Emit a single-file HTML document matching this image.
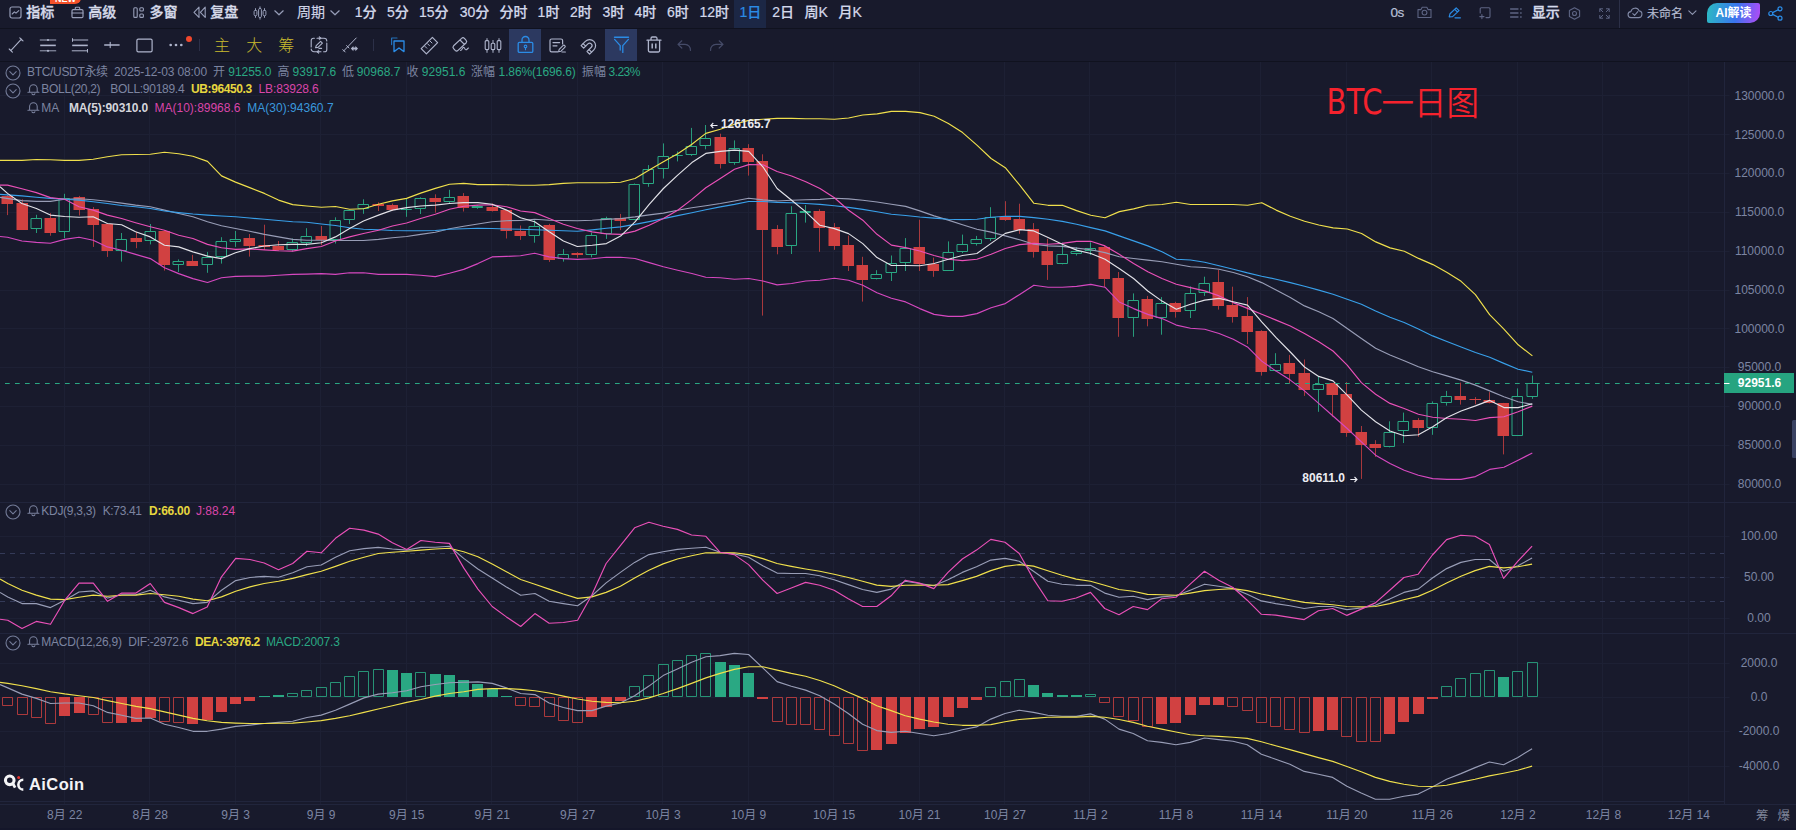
<!DOCTYPE html>
<html lang="zh-CN">
<head>
<meta charset="utf-8">
<title>BTC/USDT永续 - AiCoin</title>
<style>
html,body{margin:0;padding:0;background:#181a2c;}
body{width:1796px;height:830px;position:relative;overflow:hidden;font-family:"Liberation Sans","Noto Sans CJK SC",sans-serif;color:#d3d8ea;}
.abs{position:absolute;white-space:nowrap;}
#tb1{position:absolute;left:0;top:0;width:1796px;height:28px;border-bottom:1px solid #10121f;box-sizing:content-box;}
#tb2{position:absolute;left:0;top:29px;width:1796px;height:32px;border-bottom:1px solid #10121f;}
.t1{position:absolute;top:0;height:27px;line-height:25px;font-size:14px;color:#d3d8ea;white-space:nowrap;font-weight:500;}
.t1{-webkit-text-stroke:0.2px currentColor}
.ic{position:absolute;overflow:visible}
.hl{position:absolute;background:#1f2a4a;}
.lg{position:absolute;font-size:12px;line-height:14px;white-space:nowrap;color:#7c84a0;}
.lg span{position:absolute;top:0}
.g{color:#2aa883}.y{color:#e6d63f;font-weight:bold}.p{color:#d845a9}.b{color:#3a98dc}.w{color:#d4d5dc;font-weight:bold}
</style>
</head>
<body>
<div id="tb1"></div><div id="tb2"></div>
<div class="hl" style="left:734px;top:0;width:32px;height:28px;background:#1c2745"></div>
<div class="hl" style="left:509px;top:29px;width:32px;height:32px;background:#2c3960"></div>
<div class="hl" style="left:605px;top:29px;width:32px;height:32px;background:#2c3960"></div>
<div class="abs" style="left:50px;top:-9px;width:31px;height:13px;background:#f5522a;border-radius:0 0 6px 0;font-size:9px;line-height:9px;padding-top:3.800px;box-sizing:border-box;color:#fff;font-weight:bold;text-align:center;overflow:hidden">NEW</div>
<div class="t1" style="left:26.3px;font-weight:500;-webkit-text-stroke:0.35px currentColor;color:#d6daea">指标</div>
<div class="t1" style="left:88.3px;font-weight:500;-webkit-text-stroke:0.35px currentColor;color:#d6daea">高级</div>
<div class="t1" style="left:149.5px;font-weight:500;-webkit-text-stroke:0.35px currentColor;color:#d6daea">多窗</div>
<div class="t1" style="left:210.3px;font-weight:500;-webkit-text-stroke:0.35px currentColor;color:#d6daea">复盘</div>
<div class="t1" style="left:297px;color:#cfd4e6;font-weight:400">周期</div>
<div class="t1" style="left:354.8px">1分</div>
<div class="t1" style="left:387px">5分</div>
<div class="t1" style="left:419px">15分</div>
<div class="t1" style="left:459.8px">30分</div>
<div class="t1" style="left:499.5px">分时</div>
<div class="t1" style="left:537.6px">1时</div>
<div class="t1" style="left:570px">2时</div>
<div class="t1" style="left:602.5px">3时</div>
<div class="t1" style="left:634.5px">4时</div>
<div class="t1" style="left:667px">6时</div>
<div class="t1" style="left:699.5px">12时</div>
<div class="t1" style="left:772.2px">2日</div>
<div class="t1" style="left:804.5px">周K</div>
<div class="t1" style="left:838.6px">月K</div>
<div class="t1" style="left:739.4px;color:#2b8ce6">1日</div>
<svg class="ic" style="left:8.5px;top:5.5px" width="13" height="13" viewBox="0 0 13 13" fill="none" stroke-linecap="round" stroke-linejoin="round" ><rect x="1" y="1" width="11" height="11" rx="2" stroke="#979eb8" stroke-width="1.2"/><path d="M3.2 8 L5.4 5.8 L7 7.2 L9.8 4.6" stroke="#979eb8" stroke-width="1.1"/></svg>
<svg class="ic" style="left:70.5px;top:5.5px" width="13" height="13" viewBox="0 0 13 13" fill="none" stroke-linecap="round" stroke-linejoin="round" ><rect x="1" y="3.6" width="11" height="8" rx="1.2" stroke="#979eb8" stroke-width="1.2"/><path d="M4.3 3.4 V2 a0.8 0.8 0 0 1 .8-.8 h2.8 a0.8 0.8 0 0 1 .8.8 V3.4 M1 7 H12" stroke="#979eb8" stroke-width="1.1"/></svg>
<svg class="ic" style="left:132.5px;top:7px" width="12" height="12" viewBox="0 0 12 12" fill="none" stroke-linecap="round" stroke-linejoin="round" ><rect x="0.8" y="0.8" width="3.4" height="9.6" rx="1" stroke="#979eb8" stroke-width="1.1"/><rect x="6.8" y="0.8" width="3.6" height="3.2" rx="1" stroke="#979eb8" stroke-width="1.1"/><rect x="6.8" y="7" width="3.6" height="3.4" rx="1" stroke="#979eb8" stroke-width="1.1"/></svg>
<svg class="ic" style="left:192.5px;top:6px" width="14" height="13" viewBox="0 0 14 13" fill="none" stroke-linecap="round" stroke-linejoin="round" ><path d="M6 1.2 V11.4 L1 6.3z M12.2 1.2 V11.4 L7.4 6.3z" stroke="#979eb8" stroke-width="1.1"/></svg>
<svg class="ic" style="left:252.5px;top:6px" width="15" height="14" viewBox="0 0 15 14" fill="none" stroke-linecap="round" stroke-linejoin="round" ><g stroke="#979eb8" stroke-width="1"><path d="M2.500 2.600 V11.400 M7 0.800 V13.200 M11.500 2.600 V11.400"/><rect x="1.100" y="4.200" width="2.800" height="5.600" rx="1.300" fill="#181a2c"/><rect x="5.600" y="2.400" width="2.800" height="9.200" rx="1.300" fill="#181a2c"/><rect x="10.100" y="4.200" width="2.800" height="5.600" rx="1.300" fill="#181a2c"/></g></svg>
<svg class="ic" style="left:273.5px;top:10px" width="10" height="6" viewBox="0 0 10 6" fill="none" stroke-linecap="round" stroke-linejoin="round" ><path d="M0.8 0.8 L5 4.8 L9.2 0.8" stroke="#979eb8" stroke-width="1.2"/></svg>
<svg class="ic" style="left:330px;top:10px" width="10" height="6" viewBox="0 0 10 6" fill="none" stroke-linecap="round" stroke-linejoin="round" ><path d="M0.8 0.8 L5 4.8 L9.2 0.8" stroke="#979eb8" stroke-width="1.2"/></svg>
<div class="t1" style="left:1390.5px;font-size:13.5px;color:#b9c0d8;letter-spacing:-0.4px">0s</div>
<svg class="ic" style="left:1417px;top:6px" width="15" height="13" viewBox="0 0 15 13" fill="none" stroke-linecap="round" stroke-linejoin="round" ><path d="M1 3.6 h3 l1.2-2.4 h4.6 l1.2 2.4 h3 v7.9 h-13z" stroke="#5d6483" stroke-width="1.1"/><circle cx="7.5" cy="6.6" r="2.4" stroke="#5d6483" stroke-width="1.1"/></svg>
<svg class="ic" style="left:1448px;top:7px" width="14" height="12" viewBox="0 0 14 12" fill="none" stroke-linecap="round" stroke-linejoin="round" ><path d="M1.2 9.8 L2 6.8 L8.2 0.9 L11 3.6 L4.6 9.6z M6.8 2.4 L9.4 5" stroke="#2b8ce6" stroke-width="1.2"/><path d="M7 10.8 H12.4" stroke="#2b8ce6" stroke-width="1.2"/></svg>
<svg class="ic" style="left:1478.5px;top:6.5px" width="13" height="12" viewBox="0 0 13 12" fill="none" stroke-linecap="round" stroke-linejoin="round" ><path d="M1.2 6 V1.8 a1 1 0 0 1 1-1 H10 a1 1 0 0 1 1 1 V9.6 a1 1 0 0 1-1 1 H7" stroke="#5d6483" stroke-width="1.1"/><path d="M0.8 9.6 H5 M2.9 7.6 V11.6" stroke="#5d6483" stroke-width="1.1"/></svg>
<svg class="ic" style="left:1509.5px;top:7.5px" width="12" height="10" viewBox="0 0 12 10" fill="none" stroke-linecap="round" stroke-linejoin="round" ><path d="M0.6 1 H8 M0.6 5 H8 M0.6 9 H8" stroke="#5d6483" stroke-width="1.3"/><path d="M10.6 1 h.6 M10.6 5 h.6 M10.6 9 h.6" stroke="#5d6483" stroke-width="1.3"/></svg>
<div class="t1" style="left:1531.8px;font-weight:500;-webkit-text-stroke:0.35px currentColor;color:#d6daea">显示</div>
<svg class="ic" style="left:1567.5px;top:6.5px" width="13" height="13" viewBox="0 0 13 13" fill="none" stroke-linecap="round" stroke-linejoin="round" ><path d="M6.5 0.8 L11.6 3.6 V9.4 L6.5 12.2 L1.4 9.4 V3.6z" stroke="#5d6483" stroke-width="1.1"/><circle cx="6.5" cy="6.5" r="2" stroke="#5d6483" stroke-width="1.1"/></svg>
<svg class="ic" style="left:1598.5px;top:7.5px" width="11" height="11" viewBox="0 0 11 11" fill="none" stroke-linecap="round" stroke-linejoin="round" ><path d="M0.8 3.6 V0.8 H3.6 M7.4 0.8 H10.2 V3.6 M10.2 7.4 V10.2 H7.4 M3.6 10.2 H0.8 V7.4 M1 1 L3.8 3.8 M10 1 L7.2 3.8 M10 10 L7.2 7.2 M1 10 L3.8 7.2" stroke="#5d6483" stroke-width="1"/></svg>
<div class="abs" style="left:1619px;top:0;width:1px;height:28px;background:#2c3048"></div>
<svg class="ic" style="left:1627px;top:7px" width="16" height="12" viewBox="0 0 16 12" fill="none" stroke-linecap="round" stroke-linejoin="round" ><path d="M4.2 10.6 H11.6 a3.4 3.4 0 0 0 .5-6.75 A4.3 4.3 0 0 0 3.9 4.6 A3 3 0 0 0 4.2 10.6z" stroke="#8189a6" stroke-width="1.1"/><path d="M5.8 6.6 L7.6 8.3 L10.8 4.6" stroke="#8189a6" stroke-width="1.1"/></svg>
<div class="t1" style="left:1647px;top:1.500px;font-size:12px;color:#b4bad0;font-weight:400">未命名</div>
<svg class="ic" style="left:1687.5px;top:10px" width="9" height="6" viewBox="0 0 9 6" fill="none" stroke-linecap="round" stroke-linejoin="round" ><path d="M0.8 0.8 L4.4 4.4 L8 0.8" stroke="#8f96b0" stroke-width="1.1"/></svg>
<div class="abs" style="left:1707px;top:2.5px;width:53px;height:20.5px;border-radius:10px 2px 10px 2px;background:linear-gradient(100deg,#2bbcc2 0%,#3a74ee 55%,#b54af6 100%);color:#fff;font-size:12px;font-weight:bold;line-height:20px;text-align:center">AI解读</div>
<svg class="ic" style="left:1767.5px;top:5.5px" width="15" height="15" viewBox="0 0 15 15" fill="none" stroke-linecap="round" stroke-linejoin="round" ><circle cx="12" cy="2.8" r="2" stroke="#2b8ce6" stroke-width="1.2"/><circle cx="12" cy="12.2" r="2" stroke="#2b8ce6" stroke-width="1.2"/><circle cx="2.8" cy="7.5" r="2" stroke="#2b8ce6" stroke-width="1.2"/><path d="M4.6 6.6 L10.2 3.7 M4.6 8.4 L10.2 11.3" stroke="#2b8ce6" stroke-width="1.2"/></svg>
<svg class="ic" style="left:8px;top:37px" width="16" height="16" viewBox="0 0 16 16" fill="none" stroke-linecap="round" stroke-linejoin="round" ><path d="M2.8 13.6 L13.4 2.2 M1.2 12 L4.4 15.2 M11.8 0.8 L15 3.8" stroke="#aeb4cb" stroke-width="1.1"/></svg>
<svg class="ic" style="left:40px;top:37.5px" width="16" height="15" viewBox="0 0 16 15" fill="none" stroke-linecap="round" stroke-linejoin="round" ><path d="M0.2 2 H15.8 M0.2 12.8 H15.8" stroke="#aeb4cb" stroke-width="0.9"/><path d="M0.2 7.4 H15.8" stroke="#aeb4cb" stroke-width="1.6" stroke-linecap="butt"/><circle cx="8" cy="2" r="1.1" fill="#aeb4cb"/><circle cx="8" cy="12.8" r="1.1" fill="#aeb4cb"/></svg>
<svg class="ic" style="left:72px;top:37.5px" width="16" height="15" viewBox="0 0 16 15" fill="none" stroke-linecap="round" stroke-linejoin="round" ><path d="M0.4 2 H15.8 M0.2 12.8 H15.6 M0.5 0.6 V3.4 M15.5 11.4 V14.2" stroke="#aeb4cb" stroke-width="1"/><path d="M0.2 7.4 H15.8" stroke="#aeb4cb" stroke-width="1.6" stroke-linecap="butt"/></svg>
<svg class="ic" style="left:104px;top:41px" width="16" height="8" viewBox="0 0 16 8" fill="none" stroke-linecap="round" stroke-linejoin="round" ><path d="M0.2 4 H15.6" stroke="#aeb4cb" stroke-width="1.5" stroke-linecap="butt"/><path d="M6.2 1.4 V6.6" stroke="#aeb4cb" stroke-width="1.1"/></svg>
<svg class="ic" style="left:135.5px;top:37.5px" width="17" height="15" viewBox="0 0 17 15" fill="none" stroke-linecap="round" stroke-linejoin="round" ><rect x="0.9" y="1.2" width="15.2" height="12.6" rx="1.4" stroke="#aeb4cb" stroke-width="1.2"/></svg>
<svg class="ic" style="left:169px;top:43px" width="14" height="4" viewBox="0 0 14 4" fill="none" stroke-linecap="round" stroke-linejoin="round" ><circle cx="1.7" cy="2" r="1.35" fill="#aeb4cb"/><circle cx="7" cy="2" r="1.35" fill="#aeb4cb"/><circle cx="12.3" cy="2" r="1.35" fill="#aeb4cb"/></svg>
<div class="abs" style="left:186px;top:36px;width:6px;height:6px;border-radius:3px;background:#f0472c"></div>
<div class="abs" style="left:199px;top:39px;width:1px;height:12px;background:#2c3048"></div>
<div class="abs" style="left:214px;top:36.300px;font-size:16px;line-height:20px;color:#c9ba2e;font-weight:300">主</div>
<div class="abs" style="left:246.3px;top:36.300px;font-size:16px;line-height:20px;color:#c9ba2e;font-weight:300">大</div>
<div class="abs" style="left:278.2px;top:36.300px;font-size:16px;line-height:20px;color:#c9ba2e;font-weight:300">筹</div>
<svg class="ic" style="left:309.5px;top:36px" width="18" height="18" viewBox="0 0 18 18" fill="none" stroke-linecap="round" stroke-linejoin="round" ><path d="M4.4 2.2 H3.6 a2.4 2.4 0 0 0-2.4 2.4 V11 M13.6 15.8 h.8 a2.4 2.4 0 0 0 2.4-2.4 V7" stroke="#aeb4cb" stroke-width="1.1"/><path d="M7 2.2 H14 a2.8 2.8 0 0 1 2.8 2.8 M11 15.8 H4 a2.8 2.8 0 0 1-2.8-2.8" stroke="#aeb4cb" stroke-width="1.1"/><path d="M9.6 0.8 L11.2 2.2 L9.6 3.6z M8.4 14.4 L6.8 15.8 L8.4 17.2z" fill="#aeb4cb" stroke="#aeb4cb" stroke-width="0.8"/><path d="M5.6 11.8 L6.2 9.6 L10.6 5.4 L12.4 7.2 L8 11.4z M9 12.4 H11.6" stroke="#aeb4cb" stroke-width="1.1"/></svg>
<svg class="ic" style="left:342px;top:37px" width="17" height="16" viewBox="0 0 17 16" fill="none" stroke-linecap="round" stroke-linejoin="round" ><path d="M1.6 14 L14.2 1 M0.8 12.6 L3.2 15 M4.6 8.6 L7 11" stroke="#aeb4cb" stroke-width="1"/><path d="M8.800 11.600 l2.600-2.600 v1.600 h2 v-1.600 l2.600 2.600 l-2.600 2.600 v-1.600 h-2 v1.600z" fill="#aeb4cb"/></svg>
<div class="abs" style="left:373px;top:39px;width:1px;height:12px;background:#2c3048"></div>
<svg class="ic" style="left:389px;top:37px" width="17" height="16" viewBox="0 0 17 16" fill="none" stroke-linecap="round" stroke-linejoin="round" ><path d="M2.6 7.6 V1 H8" stroke="#2470b8" stroke-width="1.2"/><path d="M5 4 H15 V14.6 L10 11 L5 14.6z" stroke="#2b8ce6" stroke-width="1.3"/></svg>
<svg class="ic" style="left:419.5px;top:35.5px" width="19" height="19" viewBox="0 0 19 19" fill="none" stroke-linecap="round" stroke-linejoin="round" ><path d="M1.2 12.6 L12.4 1.4 L17.6 6.6 L6.4 17.8z" stroke="#aeb4cb" stroke-width="1.2"/><path d="M5 10.4 L6.8 12.2 M7.6 7.8 L9.4 9.6 M10.2 5.2 L12 7" stroke="#aeb4cb" stroke-width="1"/></svg>
<svg class="ic" style="left:452px;top:37px" width="18" height="16" viewBox="0 0 18 16" fill="none" stroke-linecap="round" stroke-linejoin="round" ><path d="M1.6 11.6 a2 2 0 0 1 0-2.8 L9.6 1.4 a2 2 0 0 1 2.8 0 L14 3.2 a2 2 0 0 1 0 2.8 L6 13.4 a2 2 0 0 1 -2.8 0z M8 3 L12.4 7.4" stroke="#aeb4cb" stroke-width="1.2"/><path d="M8.6 13.4 c1.4 0 1.6-3 3-3 s1 2.4 2.4 2.4 s1.4-1.8 2.6-1.8" stroke="#aeb4cb" stroke-width="1.1"/></svg>
<svg class="ic" style="left:484px;top:37.5px" width="18" height="15" viewBox="0 0 18 15" fill="none" stroke-linecap="round" stroke-linejoin="round" ><path d="M3 0.6 V14.4 M9 2.4 V14.4 M15 0.6 V14.4" stroke="#aeb4cb" stroke-width="1"/><rect x="1.2" y="2.6" width="3.6" height="9" rx="1" fill="#181a2c" stroke="#aeb4cb" stroke-width="1.1"/><rect x="7.2" y="5.2" width="3.6" height="6.4" rx="1" fill="#181a2c" stroke="#aeb4cb" stroke-width="1.1"/><rect x="13.200" y="2.600" width="3.6" height="9" rx="1" fill="#181a2c" stroke="#aeb4cb" stroke-width="1.1"/></svg>
<svg class="ic" style="left:517px;top:35px" width="17" height="19" viewBox="0 0 17 19" fill="none" stroke-linecap="round" stroke-linejoin="round" ><path d="M5 7.4 V5 a3.5 3.5 0 0 1 7 0 V7.4" stroke="#2b8ce6" stroke-width="1.3"/><rect x="1.2" y="7.4" width="14.6" height="10" rx="1.2" stroke="#2b8ce6" stroke-width="1.3"/><circle cx="8.500" cy="11.4" r="1.3" stroke="#2b8ce6" stroke-width="1.1"/><path d="M8.5 12.800 V14.8" stroke="#2b8ce6" stroke-width="1.1"/></svg>
<svg class="ic" style="left:548.5px;top:37.5px" width="18" height="15" viewBox="0 0 18 15" fill="none" stroke-linecap="round" stroke-linejoin="round" ><path d="M9 13.800 H2.6 a1.6 1.6 0 0 1-1.6-1.6 V2.6 a1.6 1.6 0 0 1 1.6-1.6 H12 a1.6 1.6 0 0 1 1.6 1.6 V6" stroke="#aeb4cb" stroke-width="1.2"/><path d="M4 4.600 H10.6 M4 7.800 H8" stroke="#aeb4cb" stroke-width="1.2"/><path d="M9.600 13.600 L10.2 11.400 L14 7.600 a1.200 1.200 0 0 1 1.800 1.800 L12 13.200z M13 14 H16.400" stroke="#aeb4cb" stroke-width="1.1"/></svg>
<svg class="ic" style="left:579.5px;top:36.5px" width="19" height="18" viewBox="0 0 19 18" fill="none" stroke-linecap="round" stroke-linejoin="round" ><g transform="translate(9.6,8.6) rotate(45)" stroke="#aeb4cb" stroke-width="1.2"><path d="M-6 6 V0 A6 6 0 0 1 6 0 V6 H2.400 V0 A2.400 2.400 0 0 0 -2.400 0 V6z"/><path d="M-6 3.200 H-2.400 M2.400 3.200 H6"/></g></svg>
<svg class="ic" style="left:612.5px;top:35.5px" width="17" height="18" viewBox="0 0 17 18" fill="none" stroke-linecap="round" stroke-linejoin="round" ><path d="M1.6 1.200 H15.400" stroke="#2b8ce6" stroke-width="1.600"/><path d="M1.600 3.400 L7.200 9.600 V14 M15.400 3.400 L9.800 9.600 V16.400" stroke="#2b8ce6" stroke-width="1.300"/></svg>
<svg class="ic" style="left:645.5px;top:35.5px" width="16" height="18" viewBox="0 0 16 18" fill="none" stroke-linecap="round" stroke-linejoin="round" ><path d="M1 4.200 H15 M5 4 V2.400 a1.400 1.400 0 0 1 1.400-1.400 h3.200 a1.400 1.400 0 0 1 1.400 1.400 V4 M2.400 4.400 V14.600 a1.400 1.400 0 0 0 1.400 1.400 h8.400 a1.400 1.400 0 0 0 1.400-1.400 V4.400" stroke="#aeb4cb" stroke-width="1.300"/><path d="M6.200 7.400 V12.600 M9.800 7.400 V12.600" stroke="#aeb4cb" stroke-width="1.500" stroke-linecap="butt"/></svg>
<svg class="ic" style="left:676.5px;top:40px" width="15" height="12" viewBox="0 0 15 12" fill="none" stroke-linecap="round" stroke-linejoin="round" ><path d="M4.800 0.800 L1 4.400 L4.800 8 M1.200 4.400 H8 a5.400 5.400 0 0 1 5.400 6" stroke="#454b68" stroke-width="1.200"/></svg>
<svg class="ic" style="left:708.5px;top:40px" width="15" height="12" viewBox="0 0 15 12" fill="none" stroke-linecap="round" stroke-linejoin="round" ><path d="M10.200 0.800 L14 4.400 L10.200 8 M13.800 4.400 H7 a5.400 5.400 0 0 0-5.400 6" stroke="#454b68" stroke-width="1.200"/></svg>
<svg id="chart" width="1796" height="768" viewBox="0 62 1796 768" style="position:absolute;left:0;top:62px" font-family="'Liberation Sans', 'Noto Sans CJK SC', sans-serif">
<path d="M0 95.5 H1729.500 M0 134.5 H1729.500 M0 173.5 H1729.500 M0 212.5 H1729.500 M0 251.5 H1729.500 M0 290.5 H1729.500 M0 328.5 H1729.500 M0 367.5 H1729.500 M0 406.5 H1729.500 M0 445.5 H1729.500 M0 484.5 H1729.500 M0 536.5 H1729.500 M0 577.5 H1729.500 M0 618.5 H1729.500 M0 663.5 H1729.500 M0 697.5 H1729.500 M0 731.5 H1729.500 M0 766.5 H1729.500 M64.5 62 V804 M149.5 62 V804 M235.5 62 V804 M320.5 62 V804 M406.5 62 V804 M491.5 62 V804 M577.5 62 V804 M662.5 62 V804 M748.5 62 V804 M833.5 62 V804 M919.5 62 V804 M1004.5 62 V804 M1089.5 62 V804 M1175.5 62 V804 M1260.5 62 V804 M1346.5 62 V804 M1431.5 62 V804 M1517.5 62 V804 M1602.5 62 V804 M1688.5 62 V804" stroke="#1d2034" stroke-width="1" fill="none"/>
<path d="M0 502.5 H1796 M0 633.5 H1796 M0 801.5 H1724 M0 804.5 H1796 M1724.5 62 V804" stroke="#21253c" stroke-width="1" fill="none"/>
<path d="M0 553.5 H1724 M0 577.5 H1724 M0 601.5 H1724" stroke="#343a58" stroke-width="1" stroke-dasharray="5 5" fill="none"/>
<path d="M7.5 194.8 V215.1 M22.5 199.3 V229.8 M50.5 213.1 V235.7 M79.5 195.9 V215.5 M93.5 207.1 V246.9 M107.5 224 V256.9 M136.5 231.8 V248.2 M164.5 230.2 V270.6 M192.5 254.9 V265.8 M249.5 234 V256.6 M264.5 224.7 V249.9 M278.5 241 V250.7 M321.5 226 V245.2 M378.5 202.3 V211 M392.5 203.5 V211 M435.5 194.3 V212.6 M463.5 193.1 V211.5 M492.5 203.5 V211.5 M506.5 209.8 V238.5 M520.5 225.5 V239.9 M549.5 223.8 V261.9 M577.5 252.2 V257.7 M620.5 213.9 V230.1 M720.5 133.7 V168.5 M748.5 144.2 V175.6 M762.5 154.3 V315.6 M777.5 225.1 V254.3 M819.5 209.2 V251.8 M834.5 223.1 V249.8 M848.5 235.6 V271 M862.5 256.8 V301.6 M919.5 219.7 V271 M933.5 257.6 V276.8 M1005.5 201.2 V220.9 M1019.5 203.7 V233.8 M1033.5 223.1 V257.6 M1047.5 238.8 V279.9 M1104.5 245.1 V286.9 M1118.5 272 V336.8 M1147.5 295.9 V326.3 M1175.5 301.8 V317.6 M1218.5 270 V309.6 M1232.5 286.7 V322.6 M1247.5 297.1 V344 M1261.5 330.2 V375.6 M1289.5 354.9 V383.4 M1304.5 359.5 V395.9 M1332.5 383.4 V416.8 M1346.5 382.1 V436.8 M1361.5 426 V478.9 M1375.5 440.2 V456.9 M1418.5 418.1 V436.8 M1460.5 382.6 V404.6 M1475.5 397.1 V404.3 M1489.5 392.1 V403.4 M1503.5 402.9 V454.4" stroke="#d14141" stroke-width="1" stroke-opacity=".78" fill="none"/>
<path d="M1.5 196 h11.5 v8 h-11.5z M16.5 203 h11.5 v27 h-11.5z M44.5 218 h11.5 v15 h-11.5z M73.5 197 h11.5 v13 h-11.5z M87.5 209 h11.5 v16 h-11.5z M101.5 224 h11.5 v27 h-11.5z M130.5 238 h11.5 v4 h-11.5z M158.5 231 h11.5 v34 h-11.5z M186.5 261 h11.5 v5 h-11.5z M243.5 238 h11.5 v8 h-11.5z M258.5 245 h11.5 v2 h-11.5z M272.5 246 h11.5 v4 h-11.5z M315.5 236 h11.5 v4 h-11.5z M372.5 204 h11.5 v2 h-11.5z M386.5 205 h11.5 v5 h-11.5z M429.5 198 h11.5 v4 h-11.5z M457.5 196 h11.5 v12 h-11.5z M486.5 207 h11.5 v4 h-11.5z M500.5 210 h11.5 v21 h-11.5z M514.5 231 h11.5 v5 h-11.5z M543.5 225 h11.5 v35 h-11.5z M571.5 253 h11.5 v2 h-11.5z M614.5 218 h11.5 v3 h-11.5z M714.5 137 h11.5 v27 h-11.5z M742.5 148 h11.5 v14 h-11.5z M756.5 161 h11.5 v69 h-11.5z M771.5 229 h11.5 v18 h-11.5z M813.5 211 h11.5 v17 h-11.5z M828.5 227 h11.5 v19 h-11.5z M842.5 245 h11.5 v21 h-11.5z M856.5 265 h11.5 v15 h-11.5z M913.5 247 h11.5 v17 h-11.5z M927.5 264 h11.5 v7 h-11.5z M999.5 217 h11.5 v3 h-11.5z M1013.5 219 h11.5 v11 h-11.5z M1027.5 229 h11.5 v23 h-11.5z M1041.5 251 h11.5 v14 h-11.5z M1098.5 247 h11.5 v32 h-11.5z M1112.5 278 h11.5 v40 h-11.5z M1141.5 299 h11.5 v20 h-11.5z M1169.5 303 h11.5 v9 h-11.5z M1212.5 282 h11.5 v24 h-11.5z M1226.5 305 h11.5 v12 h-11.5z M1241.5 316 h11.5 v16 h-11.5z M1255.5 331 h11.5 v41 h-11.5z M1283.5 363 h11.5 v11 h-11.5z M1298.5 373 h11.5 v17 h-11.5z M1326.5 383 h11.5 v12 h-11.5z M1340.5 394 h11.5 v39 h-11.5z M1355.5 432 h11.5 v13 h-11.5z M1369.5 444 h11.5 v4 h-11.5z M1412.5 420 h11.5 v8 h-11.5z M1454.5 396 h11.5 v4 h-11.5z M1469.5 399 h11.5 v1 h-11.5z M1483.5 400 h11.5 v3 h-11.5z M1497.5 403 h11.5 v33 h-11.5z" fill="#d14141"/>
<path d="M36.5 214.8 V218 M36.5 229 V233 M64.5 193.8 V198 M64.5 232 V238 M121.5 233 V239 M121.5 251 V261.6 M150.5 224 V231 M150.5 241 V244.4 M178.5 259.4 V261 M178.5 265 V271.9 M207.5 251.9 V257 M207.5 265 V272.8 M221.5 237.2 V241 M221.5 257 V263.6 M235.5 231 V239 M235.5 242 V246.9 M292.5 238.5 V242 M292.5 250 V251.6 M306.5 228.2 V236 M306.5 243 V246 M335.5 217.3 V220 M335.5 240 V243.5 M349.5 209.8 V210 M349.5 220 V224 M363.5 199.3 V204 M363.5 209 V213.8 M406.5 198.4 V209 M406.5 210 V216.8 M420.5 197.3 V198 M420.5 209 V214 M449.5 189.8 V197 M449.5 202 V203.5 M477.5 205.1 V206 M477.5 208 V208.8 M534.5 220.2 V226 M534.5 236 V242.7 M563.5 249.1 V254 M563.5 259 V261.6 M591.5 232.6 V235 M591.5 255 V257.3 M606.5 216.7 V218 M606.5 234 V238.9 M634.5 183.5 V184 M634.5 220 V220.2 M648.5 165.1 V169 M648.5 184 V186.8 M663.5 143.4 V156 M663.5 169 V178.5 M677.5 151.4 V155 M677.5 156 V161.4 M691.5 127.9 V146 M691.5 155 V155.9 M705.5 125 V138 M705.5 146 V149.3 M734.5 140.4 V148 M734.5 163 V164.8 M791.5 206.2 V213 M791.5 246 V254 M805.5 205 V211 M805.5 213 V222.6 M876.5 270.2 V274 M876.5 279 V279.4 M891.5 255.5 V263 M891.5 273 V281 M905.5 238.1 V248 M905.5 263 V271 M948.5 241.4 V252 M948.5 271 V270.5 M962.5 234.6 V244 M962.5 252 V253.1 M976.5 235.9 V239 M976.5 244 V245.6 M990.5 207.2 V217 M990.5 239 V240.9 M1062.5 242.6 V254 M1062.5 264 V264.3 M1076.5 247.1 V251 M1076.5 254 V255.5 M1090.5 242.3 V248 M1090.5 251 V255.1 M1133.5 293.4 V300 M1133.5 318 V336.8 M1161.5 297.1 V303 M1161.5 318 V334.7 M1190.5 286.4 V293 M1190.5 311 V318 M1204.5 276.7 V283 M1204.5 293 V295.9 M1275.5 353.2 V364 M1275.5 371 V371.4 M1318.5 376.7 V384 M1318.5 390 V411.8 M1389.5 421.3 V432 M1389.5 447 V447.4 M1403.5 412.6 V421 M1403.5 431 V443 M1432.5 401.4 V403 M1432.5 428 V434.8 M1446.5 390.9 V396 M1446.5 403 V405.6 M1517.5 388.4 V396 M1517.5 436 V435.7 M1532.5 375.5 V383 M1532.5 397 V398.8" stroke="#2aa883" stroke-width="1" stroke-opacity=".9" fill="none"/>
<path d="M31 218.5 h10.5 v10 h-10.5z M59 198.5 h10.5 v33 h-10.5z M116 239.5 h10.5 v11 h-10.5z M145 231.5 h10.5 v9 h-10.5z M173 261.5 h10.5 v3 h-10.5z M202 257.5 h10.5 v7 h-10.5z M216 241.5 h10.5 v15 h-10.5z M230 239.5 h10.5 v2 h-10.5z M287 242.5 h10.5 v7 h-10.5z M301 236.5 h10.5 v6 h-10.5z M330 220.5 h10.5 v19 h-10.5z M344 210.5 h10.5 v9 h-10.5z M358 204.5 h10.5 v4 h-10.5z M401 209.5 h10.5 v0 h-10.5z M415 198.5 h10.5 v10 h-10.5z M444 197.5 h10.5 v4 h-10.5z M472 206.5 h10.5 v1 h-10.5z M529 226.5 h10.5 v9 h-10.5z M558 254.5 h10.5 v4 h-10.5z M586 235.5 h10.5 v19 h-10.5z M601 218.5 h10.5 v15 h-10.5z M629 184.5 h10.5 v35 h-10.5z M643 169.5 h10.5 v14 h-10.5z M658 156.5 h10.5 v12 h-10.5z M672 155.5 h10.5 v0 h-10.5z M686 146.5 h10.5 v8 h-10.5z M700 138.5 h10.5 v7 h-10.5z M729 148.5 h10.5 v14 h-10.5z M786 213.5 h10.5 v32 h-10.5z M800 211.5 h10.5 v1 h-10.5z M871 274.5 h10.5 v4 h-10.5z M886 263.5 h10.5 v9 h-10.5z M900 248.5 h10.5 v14 h-10.5z M943 252.5 h10.5 v18 h-10.5z M957 244.5 h10.5 v7 h-10.5z M971 239.5 h10.5 v4 h-10.5z M985 217.5 h10.5 v21 h-10.5z M1057 254.5 h10.5 v9 h-10.5z M1071 251.5 h10.5 v2 h-10.5z M1085 248.5 h10.5 v2 h-10.5z M1128 300.5 h10.5 v17 h-10.5z M1156 303.5 h10.5 v14 h-10.5z M1185 293.5 h10.5 v17 h-10.5z M1199 283.5 h10.5 v9 h-10.5z M1270 364.5 h10.5 v6 h-10.5z M1313 384.5 h10.5 v5 h-10.5z M1384 432.5 h10.5 v14 h-10.5z M1398 421.5 h10.5 v9 h-10.5z M1427 403.5 h10.5 v24 h-10.5z M1441 396.5 h10.5 v6 h-10.5z M1512 396.5 h10.5 v39 h-10.5z M1527 383.5 h10.5 v13 h-10.5z" stroke="#2aa883" stroke-width="1" fill="none"/>
<polyline fill="none" stroke="#989db6" stroke-width="1.15" stroke-linejoin="round" points="0,197.3 21.9,200.6 36.4,201.4 50.4,201.4 64.6,199.3 79,198.8 93.2,199.8 107.4,201.3 121.6,203.1 135.6,205.1 150.3,206.8 164.5,210.1 178.7,213.5 192.9,216.8 207.5,221.8 221.5,225.7 235.5,228.5 249.7,231.3 264.4,234.4 278.5,236.9 292.7,239.4 306.7,240.2 321.4,240.2 335.4,240.5 349.6,240.5 363.5,240.5 378.5,239.4 392.4,237.7 406.6,236.5 420.6,234.4 435.3,232.3 449.5,228.8 463.7,226.3 477.9,224 492.1,221.8 506.6,220.7 520.5,220.5 534.7,219.3 549.2,220.2 563.4,220.5 577.3,220.7 592.2,220.2 606.4,219.4 620.6,218.6 635,216.9 649.2,214.9 663.4,213.1 677.7,210.2 691.9,207.7 705.8,205.7 720.3,203.5 734.5,201 748.7,198.2 762.9,199.9 777.1,201 791.6,200.2 805.8,199.7 820,199.4 834.4,198.2 848.6,198.9 862.8,200.2 877,202 891.4,204.2 905.6,206.4 919.8,210.9 934.1,215.9 948.3,220.1 962.5,224.7 976.9,229.2 991.1,232.1 1005.3,235.9 1019.7,239.8 1033.9,244.3 1048.1,245.9 1062.3,246.4 1076.6,248.1 1090.8,249.8 1105,252.6 1119.2,256.8 1133.6,258.5 1147.8,260.1 1162,261.8 1176.3,264.2 1190.5,266.7 1204.7,267.5 1219.1,269.2 1233.3,272.5 1247.5,276.7 1261.7,282.6 1276.1,290.1 1290.3,297.6 1304.5,305.9 1318.8,311.8 1333,318.5 1347.2,328.5 1361.4,338.5 1375.6,348.3 1390,355 1404.2,360.8 1418.4,366.7 1432.7,371.7 1446.9,375.9 1461.1,380.1 1475.5,385.1 1489.7,390.9 1503.9,396.8 1518.1,401.8 1532.3,404.4" />
<polyline fill="none" stroke="#f0e04c" stroke-width="1.15" stroke-linejoin="round" points="0,160.4 21.9,160.4 36.4,159.5 50.4,159.7 64.6,160.4 79,160.4 93.2,159.2 107.4,156.7 121.6,154.7 135.6,154.5 150.3,154.2 164.5,152.3 178.7,153.7 192.9,156.3 207.5,161.4 221.5,175.9 235.5,182.1 249.7,187.6 264.4,193.4 278.5,200.1 292.7,204.6 306.7,206 321.4,207.3 335.4,206.5 349.6,209.3 363.5,208.8 378.5,204.3 392.4,200.9 406.6,198.4 420.6,193.1 435.3,188.4 449.5,184.2 463.7,183.4 477.9,184.6 492.1,184.6 506.6,184.7 520.5,185.2 534.7,185.2 549.2,184.6 563.4,183.4 577.3,182.7 592.2,182.7 606.4,182.7 620.6,182.3 635,178.5 649.2,170.1 663.4,161.8 677.7,153.8 691.9,144.2 705.8,133.4 720.3,129.2 734.5,124.2 748.7,120.4 762.9,119.2 777.1,118.4 791.6,118.4 805.8,118.7 820,118.7 834.4,119.2 848.6,118 862.8,115 877.2,113.9 891.4,111.4 905.6,111.4 920,112.6 934.2,116.2 948.4,123.4 962.6,132.6 976.9,145.1 991.1,158.5 1005.3,167.7 1019.7,185.2 1033.9,203.3 1048.1,205.3 1062.3,205.3 1076.6,210.6 1090.8,215.3 1105,217.8 1119.4,211.6 1133.6,208.9 1147.8,205.3 1162,204.5 1176.3,202.3 1190.5,204.5 1204.8,204.5 1219,204.5 1233.3,204.5 1247.6,205.2 1261.8,202.7 1276.1,210.1 1290.3,216.3 1304.6,221.2 1318.8,225 1333.1,227.9 1347.3,229 1361.6,233.5 1375.8,241.9 1390.1,247.9 1404.3,251.3 1418.6,258.4 1432.9,264.6 1447.1,272.4 1461.1,281.3 1475.4,294.7 1489.6,314.7 1503.9,329.2 1518.2,344.8 1532.4,355.9" />
<polyline fill="none" stroke="#d648c0" stroke-width="1.15" stroke-linejoin="round" points="0,236.5 7.5,237.2 21.9,241 36.4,242.4 50.4,243.2 64.6,239.4 79,237.2 93.2,240.2 107.4,246.9 121.6,250.2 135.6,254.4 150.3,258.6 164.5,267.8 178.7,273.6 192.9,278.6 207.5,282.5 221.5,277.8 235.5,276.4 249.7,276.1 264.4,276.1 278.5,275.3 292.7,274.4 306.7,274.1 321.4,273.6 335.4,274.4 349.6,272.8 363.5,272.8 378.5,274.4 392.4,274.4 406.6,274.4 420.6,275.3 435.3,276.6 449.5,273.3 463.7,269.4 477.9,263.6 492.1,256.9 506.6,256.4 520.5,255.7 534.7,253.2 549.2,256.9 563.4,258.6 577.3,259.4 592.2,258.8 606.4,257.3 620.6,257.3 635,258.5 649.2,262.6 663.4,266.8 677.7,270.2 691.9,273.5 705.8,277.2 720.3,277.7 734.5,279.3 748.7,278.5 762.9,281 777.1,284.9 791.6,283.5 805.8,281 820,280.2 834.4,278.2 848.6,280.2 862.8,285.2 877,292.7 891.4,298.2 905.6,301.9 919.8,308.6 934.1,314.4 948.3,316.4 962.5,316.4 976.9,313.6 991.1,307.8 1005.3,303.6 1019.7,294.4 1033.9,285.2 1048.1,287.2 1062.3,287.2 1076.6,286.4 1090.8,284.4 1105,287.2 1119.2,301.9 1133.6,308.6 1147.8,314.4 1162,318.6 1176.3,325.1 1190.5,328.2 1204.7,329.3 1219.1,333.5 1233.3,339.3 1247.5,346.9 1261.7,361.1 1276.1,371.1 1290.3,380.1 1304.5,390.9 1318.7,403.4 1333,416 1347.2,428.5 1361.4,441.9 1375.6,455.2 1390,463.6 1404.2,470.3 1418.4,475.3 1432.7,478.6 1446.9,479.4 1461.1,479.4 1475.5,476.6 1489.7,469.4 1503.9,467.2 1518.1,460.2 1532.3,453.1" />
<polyline fill="none" stroke="#38a0ea" stroke-width="1.15" stroke-linejoin="round" points="0,194.3 21.9,195.9 36.4,197.3 50.4,198.4 64.6,199.3 79,200.1 93.2,201.8 107.4,203.5 121.6,205.5 135.6,206.8 150.3,208.5 164.5,211 178.7,212.6 192.9,214 207.5,215.1 221.5,216 235.5,216.8 249.7,218 264.4,219.3 278.5,220.5 292.7,221.8 306.7,222.3 321.4,224 335.4,225.5 349.6,227.7 363.5,229.3 378.5,229.8 392.4,230.5 406.6,230.7 420.6,230.7 435.3,230.5 449.5,229.3 463.7,228.8 477.9,228.2 492.1,228.5 506.6,229 520.5,229.3 534.7,229.7 549.2,230.2 563.4,230.7 577.3,231.3 592.2,229.9 606.4,228.3 620.6,226.9 635,224.4 649.2,221.6 663.4,218.6 677.7,215.6 691.9,212.7 705.8,209.7 720.3,206.9 734.5,204.4 748.7,201.5 762.9,201.5 777.1,202.4 791.6,202.7 805.8,203.5 820,204.4 834.4,205.7 848.6,207.4 862.8,209.4 877,211.7 891.4,214.2 905.6,215.5 919.8,217 934.1,218.1 948.3,219.2 962.5,219.6 976.9,219.2 991.1,217.2 1005.3,216.2 1019.7,216.4 1033.9,217.6 1048.1,219.2 1062.3,221.4 1076.6,224.2 1090.8,227.6 1105,230.9 1119.2,235.9 1133.6,240.9 1147.8,245.9 1162,251.8 1176.3,259.2 1190.5,260 1204.7,262.2 1219.1,265.8 1233.3,269.2 1247.5,272.9 1261.7,276.2 1276.1,279.2 1290.3,282.6 1304.5,286.2 1318.8,290.1 1333,294.2 1347.2,299.3 1361.4,304.3 1375.6,311 1390,317.3 1404.2,322.5 1418.4,329 1432.7,335.9 1446.9,341.5 1461.1,347 1475.5,352.5 1489.7,357.3 1503.9,363.4 1518.1,369.2 1532.3,372.2" />
<polyline fill="none" stroke="#ea50b8" stroke-width="1.15" stroke-linejoin="round" points="0,185.1 7.5,185.1 21.9,188.8 36.4,192.6 50.4,197.6 64.6,199.3 79,206.8 93.2,210.1 107.4,215.1 121.6,218.5 135.6,222.7 150.3,226.8 164.5,230.2 178.7,235.2 192.9,238.5 207.5,244.4 221.5,247.7 235.5,249.4 249.7,248.9 264.4,249.9 278.5,250.7 292.7,251.1 306.7,248.6 321.4,246.5 335.4,241 349.6,236.9 363.5,233.5 378.5,230.2 392.4,226 406.6,223 420.6,218.5 435.3,214.3 449.5,209.3 463.7,206.3 477.9,205.1 492.1,204.8 506.6,206.8 520.5,211 534.7,212.6 549.2,218.5 563.4,224.3 577.3,228.5 592.2,231.9 606.4,233.9 620.6,234.4 635,231.1 649.2,225.3 663.4,218.6 677.7,210.2 691.9,199.4 705.8,187.7 720.3,178.5 734.5,169.3 748.7,164.6 762.9,164.8 777.1,171.5 791.6,176 805.8,181.8 820,188.5 834.4,197.7 848.6,210.2 862.8,220.2 877,234.3 891.4,245.1 905.6,247.6 919.8,251 934.1,255.5 948.3,259.3 962.5,260.6 976.9,259.3 991.1,254.3 1005.3,248.5 1019.7,244.6 1033.9,243.4 1048.1,244.3 1062.3,243.4 1076.6,241.4 1090.8,241.3 1105,245.9 1119.2,254.3 1133.6,263.5 1147.8,271.8 1162,278.5 1176.3,284.2 1190.5,287.6 1204.7,290.9 1219.1,295.9 1233.3,302.6 1247.5,308.4 1261.7,314.3 1276.1,320.1 1290.3,326 1304.5,333.5 1318.8,341.8 1333,351 1347.2,365.2 1361.4,382.6 1375.6,394.3 1390,403.4 1404.2,408.5 1418.4,414.3 1432.7,417.3 1446.9,418.5 1461.1,419.3 1475.5,420.5 1489.7,417.6 1503.9,416.8 1518.1,411.8 1532.3,406.1" />
<polyline fill="none" stroke="#e2e2e8" stroke-width="1.15" stroke-linejoin="round" points="0,186.7 7.5,193.4 21.9,203.5 36.4,208.5 50.4,215.1 64.6,216.5 79,217.3 93.2,216.8 107.4,223.5 121.6,224.7 135.6,231.8 150.3,236.9 164.5,245.2 178.7,246.9 192.9,251.9 207.5,256.1 221.5,258.6 235.5,252.7 249.7,248.6 264.4,246 278.5,244.7 292.7,244.4 306.7,244.4 321.4,242.7 335.4,236.9 349.6,228.5 363.5,221 378.5,215.1 392.4,210.1 406.6,207.6 420.6,206 435.3,205.1 449.5,203.5 463.7,202.6 477.9,202.6 492.1,204.3 506.6,210.1 520.5,217.7 534.7,221.8 549.2,231.8 563.4,241 577.3,246.5 592.2,245.3 606.4,243.6 620.6,236.1 635,221.9 649.2,204.4 663.4,188.5 677.7,175.1 691.9,162.6 705.8,153.4 720.3,151.4 734.5,150.1 748.7,151.4 762.9,166.8 777.1,188.5 791.6,200.2 805.8,211.9 820,225.3 834.4,228.6 848.6,233.6 862.8,243.6 877,257.6 891.4,265.5 905.6,265.5 919.8,265.7 934.1,263.5 948.3,259.3 962.5,255.5 976.9,253.5 991.1,243.4 1005.3,233.4 1019.7,229.6 1033.9,230.9 1048.1,237.6 1062.3,244.3 1076.6,250.1 1090.8,253.5 1105,259.3 1119.2,268.5 1133.6,278.5 1147.8,291 1162,301.1 1176.3,309.3 1190.5,304.3 1204.7,300.1 1219.1,298.4 1233.3,301.8 1247.5,305.1 1261.7,321.8 1276.1,337.7 1290.3,352 1304.5,367 1318.7,376.4 1333,380.9 1347.2,395.1 1361.4,410.1 1375.6,421.8 1390,431 1404.2,435.7 1418.4,434.8 1432.7,426.8 1446.9,417.6 1461.1,411 1475.5,405.9 1489.7,400.4 1503.9,407.6 1518.1,407.6 1532.3,403.8" />
<path d="M5 383.5 H1724" stroke="#2aa883" stroke-width="1" stroke-dasharray="4.7 5.3" fill="none"/>
<text x="721" y="128.2" font-size="12" font-weight="bold" fill="#ececf2" textLength="49.5" lengthAdjust="spacingAndGlyphs">126165.7</text>
<path d="M717.5 125.5 H710.8 M713.3 123 L710.8 125.5 L713.3 128" stroke="#ececf2" stroke-width="1.1" fill="none"/>
<text x="1302.300" y="482.200" font-size="12" font-weight="bold" fill="#ececf2">80611.0</text>
<path d="M1350.300 479.500 H1357 M1354.500 477 L1357 479.500 L1354.500 482" stroke="#ececf2" stroke-width="1.1" fill="none"/>
<text x="1326.500" y="114.400" font-size="35.5" fill="#f5222d" font-family="'DejaVu Sans Condensed', 'DejaVu Sans', sans-serif" textLength="56" lengthAdjust="spacingAndGlyphs">BTC</text>
<text x="1381.500" y="114.600" font-size="33.5" fill="#f5222d" font-family="'Noto Sans CJK SC', sans-serif" font-weight="350" textLength="97.500" lengthAdjust="spacingAndGlyphs">一日图</text>
<polyline fill="none" stroke="#989db6" stroke-width="1.15" stroke-linejoin="round" points="0,592.4 7.8,596.9 22,603.6 36.3,603.6 50.5,607.6 64.8,600.2 79,592 93.3,590.9 107.5,598 121.8,594.7 136,594.7 150.3,590.2 164.5,596.9 178.8,600.2 193,603.6 207.2,602.4 221.5,590.2 235.7,580.6 250,577.5 264.2,576.4 278.5,577.3 292.7,572.8 307,566.8 321.2,565 335.5,557.2 349.7,550.8 364,548.6 378.2,547.4 392.4,549 406.7,550.1 420.9,547.4 435.2,547.2 449.4,546.3 463.7,558.4 477.9,569 492.2,578 506.4,586.9 520.7,595.3 534.9,593.5 549.1,601.3 563.4,603.6 577.6,605.8 591.9,595.8 606.1,582.9 620.4,572.4 634.6,562.4 648.9,554.6 663.1,551.7 677.4,549.4 691.6,548.3 705.9,547.2 720.1,552.3 734.3,553.9 748.6,557.2 762.8,565.7 777.1,573.1 791.3,573.5 805.6,573.5 819.8,575.7 834.1,579.7 848.3,584.6 862.6,589.5 876.8,592.4 891.1,589.1 905.3,581.3 919.5,583.5 933.8,585.7 948,579.7 962.3,572.4 976.5,566.8 990.8,560.1 1005,558.4 1019.3,561.2 1033.5,571.3 1047.8,581.3 1062,584.2 1076.2,585.3 1090.5,585.3 1104.7,593.1 1119,597.3 1133.2,596.2 1147.5,599.6 1161.7,596.9 1176,595.8 1190.2,590.2 1204.5,584.2 1218.7,586.2 1233,588.4 1247.2,594.2 1261.4,600.9 1275.7,603.6 1289.9,605.8 1304.2,608.5 1318.4,606.5 1332.7,606.5 1346.9,609.6 1361.2,608 1375.4,605.3 1389.7,599.1 1403.9,592.4 1418.2,589.1 1432.4,578 1446.6,568.6 1460.9,562.4 1475.1,559.5 1489.4,559.5 1503.6,571.3 1517.9,565.7 1532.1,558.1" />
<polyline fill="none" stroke="#f0e04c" stroke-width="1.15" stroke-linejoin="round" points="0,579.1 7.8,583.5 22,590.2 36.3,595.1 50.5,599.1 64.8,599.6 79,597.3 93.3,595.1 107.5,596.2 121.8,595.3 136,595.1 150.3,593.5 164.5,594.7 178.8,596.2 193,599.1 207.2,600.7 221.5,596.9 235.7,591.3 250,586.9 264.2,583.5 278.5,581.3 292.7,578.4 307,574.6 321.2,571.3 335.5,566.4 349.7,561.2 364,557.2 378.2,553.5 392.4,552.3 406.7,551.2 420.9,550.1 435.2,549 449.4,548.3 463.7,551.7 477.9,556.8 492.2,564.1 506.4,571.7 520.7,579.5 534.9,584.2 549.1,589.1 563.4,594 577.6,598.4 591.9,596.9 606.1,592.4 620.4,586.2 634.6,578 648.9,570.2 663.1,563.9 677.4,559 691.6,555.7 705.9,552.8 720.1,552.8 734.3,552.8 748.6,554.6 762.8,558.6 777.1,563.5 791.3,566.4 805.6,569 819.8,571.3 834.1,574.2 848.3,577.5 862.6,581.3 876.8,585.1 891.1,586.4 905.3,585.3 919.5,585.1 933.8,585.3 948,584.6 962.3,580.6 976.5,576.4 990.8,570.6 1005,566.4 1019.3,564.6 1033.5,566.1 1047.8,570.8 1062,575.3 1076.2,579.1 1090.5,581.3 1104.7,585.3 1119,589.5 1133.2,591.3 1147.5,594.4 1161.7,594.7 1176,595.3 1190.2,593.1 1204.5,590.6 1218.7,589.5 1233,588.6 1247.2,590.6 1261.4,594 1275.7,596.9 1289.9,599.8 1304.2,602.4 1318.4,603.6 1332.7,604.7 1346.9,606.5 1361.2,606.9 1375.4,606.5 1389.7,603.6 1403.9,599.8 1418.2,596.4 1432.4,590.2 1446.6,583.1 1460.9,576.2 1475.1,570.6 1489.4,566.4 1503.6,567.9 1517.9,566.8 1532.1,564.1" />
<polyline fill="none" stroke="#ea50b8" stroke-width="1.15" stroke-linejoin="round" points="0,619.2 7.8,620.3 22,628.5 36.3,621.4 50.5,624.3 64.8,600.2 79,583.1 93.3,583.1 107.5,601.3 121.8,593.1 136,593.1 150.3,583.5 164.5,602.4 178.8,607.6 193,613.6 207.2,606.9 221.5,576.8 235.7,558.4 250,559.5 264.2,563 278.5,569.7 292.7,563.5 307,551.2 321.2,552.8 335.5,538.3 349.7,528.3 364,530.1 378.2,534.1 392.4,542.8 406.7,549.4 420.9,540.5 435.2,542.3 449.4,543.4 463.7,567.9 477.9,589.1 492.2,606.5 506.4,616.9 520.7,626.5 534.9,613.6 549.1,623.2 563.4,622.5 577.6,620.3 591.9,594.7 606.1,563.5 620.4,545.7 634.6,527.8 648.9,522.3 663.1,526.3 677.4,529.4 691.6,535 705.9,536.3 720.1,552.3 734.3,554.6 748.6,564.6 762.8,580.2 777.1,593.5 791.3,588 805.6,582.4 819.8,585.3 834.1,590.2 848.3,598.7 862.6,606.5 876.8,606.5 891.1,595.8 905.3,580.2 919.5,583.1 933.8,588.6 948,572.4 962.3,559 976.5,550.1 990.8,539.4 1005,542.3 1019.3,553.5 1033.5,579.1 1047.8,600.7 1062,601.3 1076.2,598 1090.5,592.4 1104.7,608.5 1119,614.7 1133.2,606.5 1147.5,609.6 1161.7,598.7 1176,597.3 1190.2,584.2 1204.5,571.3 1218.7,580.2 1233,587.5 1247.2,600.2 1261.4,614.3 1275.7,615.1 1289.9,617.4 1304.2,619.6 1318.4,610.7 1332.7,608.5 1346.9,615.4 1361.2,609.1 1375.4,602.9 1389.7,590.2 1403.9,577.5 1418.2,574.2 1432.4,555 1446.6,539.6 1460.9,535.2 1475.1,536.3 1489.4,544.5 1503.6,578.4 1517.9,561.2 1532.1,546.1" />
<path d="M59 697 h11 v19 h-11z M74 697 h11 v16 h-11z M116 697 h11 v26 h-11z M131 697 h11 v25 h-11z M145 697 h11 v21 h-11z M187 697 h11 v27 h-11z M202 697 h11 v23 h-11z M216 697 h11 v15 h-11z M230 697 h11 v7 h-11z M244 697 h11 v4 h-11z M586 697 h11 v20 h-11z M601 697 h11 v10 h-11z M615 697 h11 v4 h-11z M757 697 h11 v2 h-11z M871 697 h11 v53 h-11z M886 697 h11 v47 h-11z M900 697 h11 v36 h-11z M914 697 h11 v32 h-11z M928 697 h11 v30 h-11z M943 697 h11 v20 h-11z M957 697 h11 v11 h-11z M971 697 h11 v3 h-11z M1156 697 h11 v27 h-11z M1170 697 h11 v26 h-11z M1185 697 h11 v18 h-11z M1199 697 h11 v8 h-11z M1213 697 h11 v8 h-11z M1313 697 h11 v34 h-11z M1327 697 h11 v33 h-11z M1384 697 h11 v37 h-11z M1398 697 h11 v25 h-11z M1413 697 h11 v17 h-11z M1427 697 h11 v2 h-11z" fill="#d14141"/>
<path d="M2.5 697.5 h10 v8 h-10z M17.5 697.5 h10 v17 h-10z M31.5 697.5 h10 v20 h-10z M45.5 697.5 h10 v26 h-10z M88.5 697.5 h10 v17 h-10z M102.5 697.5 h10 v25 h-10z M159.5 697.5 h10 v24 h-10z M173.5 697.5 h10 v25 h-10z M515.5 697.5 h10 v8 h-10z M529.5 697.5 h10 v9 h-10z M544.5 697.5 h10 v19 h-10z M558.5 697.5 h10 v23 h-10z M572.5 697.5 h10 v25 h-10z M772.5 697.5 h10 v24 h-10z M786.5 697.5 h10 v27 h-10z M800.5 697.5 h10 v27 h-10z M814.5 697.5 h10 v32 h-10z M829.5 697.5 h10 v38 h-10z M843.5 697.5 h10 v46 h-10z M857.5 697.5 h10 v53 h-10z M1099.5 697.5 h10 v5 h-10z M1113.5 697.5 h10 v19 h-10z M1128.5 697.5 h10 v23 h-10z M1142.5 697.5 h10 v29 h-10z M1227.5 697.5 h10 v9 h-10z M1242.5 697.5 h10 v13 h-10z M1256.5 697.5 h10 v25 h-10z M1270.5 697.5 h10 v29 h-10z M1284.5 697.5 h10 v32 h-10z M1299.5 697.5 h10 v35 h-10z M1341.5 697.5 h10 v39 h-10z M1356.5 697.5 h10 v44 h-10z M1370.5 697.5 h10 v44 h-10z" stroke="#d14141" stroke-opacity=".8" fill="none"/>
<path d="M259 696 h11 v1 h-11z M273 695 h11 v2 h-11z M387 670 h11 v27 h-11z M401 673 h11 v24 h-11z M430 674 h11 v23 h-11z M444 675 h11 v22 h-11z M458 680 h11 v17 h-11z M472 684 h11 v13 h-11z M487 689 h11 v8 h-11z M501 696 h11 v1 h-11z M715 662 h11 v35 h-11z M729 665 h11 v32 h-11z M743 673 h11 v24 h-11z M1028 685 h11 v12 h-11z M1042 693 h11 v4 h-11z M1057 695 h11 v2 h-11z M1071 695 h11 v2 h-11z M1498 677 h11 v20 h-11z" fill="#2aa883"/>
<path d="M287.5 693.5 h10 v3 h-10z M301.5 690.5 h10 v6 h-10z M316.5 687.5 h10 v9 h-10z M330.5 682.5 h10 v14 h-10z M344.5 676.5 h10 v20 h-10z M358.5 671.5 h10 v25 h-10z M373.5 669.5 h10 v27 h-10z M415.5 672.5 h10 v24 h-10z M629.5 686.5 h10 v10 h-10z M643.5 675.5 h10 v21 h-10z M658.5 664.5 h10 v32 h-10z M672.5 660.5 h10 v36 h-10z M686.5 655.5 h10 v41 h-10z M700.5 653.5 h10 v43 h-10z M985.5 687.5 h10 v9 h-10z M1000.5 681.5 h10 v15 h-10z M1014.5 679.5 h10 v17 h-10z M1085.5 694.5 h10 v2 h-10z M1441.5 686.5 h10 v10 h-10z M1455.5 678.5 h10 v18 h-10z M1470.5 673.5 h10 v23 h-10z M1484.5 670.5 h10 v26 h-10z M1512.5 671.5 h10 v25 h-10z M1527.5 662.5 h10 v34 h-10z" stroke="#2aa883" stroke-opacity=".85" fill="none"/>
<polyline fill="none" stroke="#989db6" stroke-width="1.15" stroke-linejoin="round" points="0,684.5 7.8,687.9 22,694.1 36.3,698.4 50.5,703.5 64.8,703 79,703 93.3,705.7 107.5,712.4 121.8,715.3 136,718.4 150.3,718 164.5,724.2 178.8,727.5 193,731.3 207.2,731.3 221.5,729.1 235.7,726.4 250,725.1 264.2,723.5 278.5,722.4 292.7,721.3 307,717.5 321.2,715.1 335.5,710.2 349.7,704.1 364,697.9 378.2,694.1 392.4,692.8 406.7,690.8 420.9,686.8 435.2,684.5 449.4,682.8 463.7,682.3 477.9,681.9 492.2,683.4 506.4,687.9 520.7,693.5 534.9,694.6 549.1,703 563.4,707.5 577.6,710.6 591.9,710.6 606.1,706.1 620.4,703 634.6,695.7 648.9,686.1 663.1,675.6 677.4,669 691.6,662.3 705.9,656.7 720.1,655.6 734.3,653.4 748.6,654.5 762.8,667.8 777.1,681.6 791.3,686.3 805.6,690.1 819.8,695.7 834.1,703.9 848.3,713.5 862.6,724.2 876.8,730.6 891.1,732.4 905.3,731.3 919.5,733.5 933.8,735.8 948,733.5 962.3,729.8 976.5,726.9 990.8,719.1 1005,713.5 1019.3,710.2 1033.5,712.4 1047.8,715.3 1062,716.2 1076.2,716.4 1090.5,713.9 1104.7,719.1 1119,729.1 1133.2,733.5 1147.5,740.7 1161.7,742.4 1176,744.7 1190.2,742.4 1204.5,738 1218.7,739.6 1233,741.3 1247.2,744.7 1261.4,754.3 1275.7,759.2 1289.9,764.3 1304.2,771.4 1318.4,774.3 1332.7,777.4 1346.9,786.3 1361.2,793 1375.4,799.2 1389.7,799.2 1403.9,796.3 1418.2,794.1 1432.4,787 1446.6,779.2 1460.9,773.6 1475.1,767.6 1489.4,762 1503.6,764.7 1517.9,757.4 1532.1,748.7" />
<polyline fill="none" stroke="#f0e04c" stroke-width="1.15" stroke-linejoin="round" points="0,682.3 7.8,683.4 22,685.7 36.3,688.6 50.5,691.7 64.8,693.9 79,695.7 93.3,697.5 107.5,700.6 121.8,703.5 136,706.4 150.3,708.6 164.5,711.9 178.8,715.1 193,718.4 207.2,720.8 221.5,722.4 235.7,723.1 250,723.5 264.2,723.5 278.5,723.3 292.7,723.1 307,722 321.2,720.6 335.5,718.4 349.7,715.7 364,712.4 378.2,709 392.4,705.7 406.7,702.4 420.9,699.5 435.2,696.1 449.4,693.5 463.7,691.7 477.9,689.4 492.2,688.6 506.4,688.6 520.7,689.4 534.9,690.8 549.1,693 563.4,696.1 577.6,699 591.9,701.2 606.1,702.4 620.4,702.8 634.6,701.2 648.9,697.9 663.1,693.5 677.4,688.6 691.6,683.4 705.9,677.9 720.1,673.4 734.3,669.4 748.6,666.7 762.8,666.7 777.1,670.1 791.3,673.4 805.6,676.3 819.8,680.5 834.1,685.7 848.3,692.3 862.6,698.4 876.8,705.7 891.1,710.6 905.3,715.7 919.5,719.1 933.8,722 948,724.2 962.3,725.3 976.5,725.3 990.8,724.6 1005,721.7 1019.3,719.5 1033.5,718.4 1047.8,717.3 1062,717.1 1076.2,717.1 1090.5,716.4 1104.7,717.3 1119,719.5 1133.2,722.4 1147.5,726.2 1161.7,729.1 1176,732 1190.2,734.7 1204.5,735.8 1218.7,736.4 1233,737.3 1247.2,738.4 1261.4,741.8 1275.7,745.8 1289.9,749.6 1304.2,753.6 1318.4,757.6 1332.7,761.4 1346.9,766.5 1361.2,771.8 1375.4,777.4 1389.7,781.4 1403.9,784.3 1418.2,786.3 1432.4,786.5 1446.6,785.2 1460.9,782.1 1475.1,779.2 1489.4,775.9 1503.6,773.2 1517.9,770.3 1532.1,766.1" />
<g font-size="12" fill="#7c85a2" text-anchor="middle">
<text x="1759.5" y="487.8">80000.0</text>
<text x="1759.5" y="449">85000.0</text>
<text x="1759.5" y="410.2">90000.0</text>
<text x="1759.5" y="371.4">95000.0</text>
<text x="1759.5" y="332.6">100000.0</text>
<text x="1759.5" y="293.8">105000.0</text>
<text x="1759.5" y="254.9">110000.0</text>
<text x="1759.5" y="216.1">115000.0</text>
<text x="1759.5" y="177.3">120000.0</text>
<text x="1759.5" y="138.5">125000.0</text>
<text x="1759.5" y="99.7">130000.0</text>
<text x="1759" y="539.7">100.00</text>
<text x="1759" y="580.8">50.00</text>
<text x="1759" y="621.9">0.00</text>
<text x="1759" y="666.6">2000.0</text>
<text x="1759" y="700.9">0.0</text>
<text x="1759" y="735.2">-2000.0</text>
<text x="1759" y="769.6">-4000.0</text>
<text x="64.8" y="819.3">8月 22</text>
<text x="150.3" y="819.3">8月 28</text>
<text x="235.7" y="819.3">9月 3</text>
<text x="321.2" y="819.3">9月 9</text>
<text x="406.7" y="819.3">9月 15</text>
<text x="492.2" y="819.3">9月 21</text>
<text x="577.6" y="819.3">9月 27</text>
<text x="663.1" y="819.3">10月 3</text>
<text x="748.6" y="819.3">10月 9</text>
<text x="834.1" y="819.3">10月 15</text>
<text x="919.5" y="819.3">10月 21</text>
<text x="1005" y="819.3">10月 27</text>
<text x="1090.5" y="819.3">11月 2</text>
<text x="1176" y="819.3">11月 8</text>
<text x="1261.4" y="819.3">11月 14</text>
<text x="1346.9" y="819.3">11月 20</text>
<text x="1432.4" y="819.3">11月 26</text>
<text x="1517.9" y="819.3">12月 2</text>
<text x="1603.4" y="819.3">12月 8</text>
<text x="1688.8" y="819.3">12月 14</text>
</g>
<text x="1756" y="819.5" font-size="12.5" fill="#7f8499">筹</text><text x="1777.5" y="819.5" font-size="12.5" fill="#7f8499">爆</text>
<rect x="1724" y="373" width="70" height="20" fill="#26a480"/>
<path d="M1724 383.5 h5.5" stroke="#fff" stroke-width="1"/>
<text x="1759.5" y="386.900" font-size="12" font-weight="bold" fill="#fff" text-anchor="middle">92951.6</text>
<rect x="1792" y="420" width="5" height="38" rx="1.5" fill="#3a4262"/>
<rect x="0" y="828" width="1796" height="2" fill="#14162a"/>
</svg>
<div class="lg" style="left:0;top:65px">
<span class="" style="left:27px;letter-spacing:-0.323px">BTC/USDT永续</span>
<span class="" style="left:114px;letter-spacing:-0.111px">2025-12-03 08:00</span>
<span class="" style="left:213px;letter-spacing:0.000px">开</span>
<span class="g" style="left:228.3px;letter-spacing:-0.048px">91255.0</span>
<span class="" style="left:277.6px;letter-spacing:0.000px">高</span>
<span class="g" style="left:292.5px;letter-spacing:0.052px">93917.6</span>
<span class="" style="left:342px;letter-spacing:0.000px">低</span>
<span class="g" style="left:356.8px;letter-spacing:0.037px">90968.7</span>
<span class="" style="left:406.4px;letter-spacing:0.000px">收</span>
<span class="g" style="left:421.8px;letter-spacing:0.037px">92951.6</span>
<span class="" style="left:471px;letter-spacing:0.089px">涨幅</span>
<span class="g" style="left:498.6px;letter-spacing:-0.127px">1.86%(1696.6)</span>
<span class="" style="left:581.7px;letter-spacing:0.206px">振幅</span>
<span class="g" style="left:608.5px;letter-spacing:-0.534px">3.23%</span>
</div>
<div class="lg" style="left:0;top:82.3px">
<span class="" style="left:41.3px;letter-spacing:-0.305px">BOLL(20,2)</span>
<span class="" style="left:110.2px;letter-spacing:-0.272px">BOLL:90189.4</span>
<span class="y" style="left:191px;letter-spacing:-0.390px">UB:96450.3</span>
<span class="p" style="left:258.6px;letter-spacing:-0.154px">LB:83928.6</span>
</div>
<div class="lg" style="left:0;top:100.6px">
<span class="" style="left:41.3px;letter-spacing:-0.011px">MA</span>
<span class="w" style="left:68.9px;letter-spacing:-0.117px">MA(5):90310.0</span>
<span class="p" style="left:154.6px;letter-spacing:-0.020px">MA(10):89968.6</span>
<span class="b" style="left:247.3px;letter-spacing:0.019px">MA(30):94360.7</span>
</div>
<div class="lg" style="left:0;top:503.7px">
<span class="" style="left:41.3px;letter-spacing:-0.284px">KDJ(9,3,3)</span>
<span class="" style="left:102.7px;letter-spacing:-0.344px">K:73.41</span>
<span class="y" style="left:149px;letter-spacing:-0.268px">D:66.00</span>
<span class="p" style="left:196px;letter-spacing:-0.029px">J:88.24</span>
</div>
<div class="lg" style="left:0;top:634.9px">
<span class="" style="left:41.3px;letter-spacing:-0.230px">MACD(12,26,9)</span>
<span class="" style="left:128.3px;letter-spacing:-0.327px">DIF:-2972.6</span>
<span class="y" style="left:195px;letter-spacing:-0.483px">DEA:-3976.2</span>
<span class="g" style="left:266px;letter-spacing:-0.148px">MACD:2007.3</span>
</div>
<svg class="ic" style="left:5px;top:64.9px" width="16" height="16" viewBox="0 0 16 16" fill="none" stroke="#737b98" stroke-width="1.1" stroke-linecap="round" stroke-linejoin="round"><circle cx="8" cy="8" r="7"/><path d="M4.800 6.600 L8 9.800 L11.200 6.600"/></svg>
<svg class="ic" style="left:5px;top:82.9px" width="16" height="16" viewBox="0 0 16 16" fill="none" stroke="#737b98" stroke-width="1.1" stroke-linecap="round" stroke-linejoin="round"><circle cx="8" cy="8" r="7"/><path d="M4.800 6.600 L8 9.800 L11.200 6.600"/></svg>
<svg class="ic" style="left:26.6px;top:83px" width="13" height="13" viewBox="0 0 13 13" fill="none" stroke="#7c84a0" stroke-width="1.05" stroke-linecap="round" stroke-linejoin="round"><path d="M0.900 9.200 H11.900 M2.600 9 V5.600 a3.800 3.900 0 0 1 7.600 0 V9 M4.900 10.800 a1.600 1.400 0 0 0 3 0"/></svg>
<svg class="ic" style="left:26.6px;top:101px" width="13" height="13" viewBox="0 0 13 13" fill="none" stroke="#7c84a0" stroke-width="1.05" stroke-linecap="round" stroke-linejoin="round"><path d="M0.900 9.200 H11.900 M2.600 9 V5.600 a3.800 3.900 0 0 1 7.600 0 V9 M4.900 10.800 a1.600 1.400 0 0 0 3 0"/></svg>
<svg class="ic" style="left:5px;top:503.8px" width="16" height="16" viewBox="0 0 16 16" fill="none" stroke="#737b98" stroke-width="1.1" stroke-linecap="round" stroke-linejoin="round"><circle cx="8" cy="8" r="7"/><path d="M4.800 6.600 L8 9.800 L11.200 6.600"/></svg>
<svg class="ic" style="left:26.6px;top:504.1px" width="13" height="13" viewBox="0 0 13 13" fill="none" stroke="#7c84a0" stroke-width="1.05" stroke-linecap="round" stroke-linejoin="round"><path d="M0.900 9.200 H11.900 M2.600 9 V5.600 a3.800 3.900 0 0 1 7.600 0 V9 M4.900 10.800 a1.600 1.400 0 0 0 3 0"/></svg>
<svg class="ic" style="left:5px;top:635px" width="16" height="16" viewBox="0 0 16 16" fill="none" stroke="#737b98" stroke-width="1.1" stroke-linecap="round" stroke-linejoin="round"><circle cx="8" cy="8" r="7"/><path d="M4.800 6.600 L8 9.800 L11.200 6.600"/></svg>
<svg class="ic" style="left:26.6px;top:635.3px" width="13" height="13" viewBox="0 0 13 13" fill="none" stroke="#7c84a0" stroke-width="1.05" stroke-linecap="round" stroke-linejoin="round"><path d="M0.900 9.200 H11.900 M2.600 9 V5.600 a3.800 3.900 0 0 1 7.600 0 V9 M4.900 10.800 a1.600 1.400 0 0 0 3 0"/></svg>
<svg class="ic" style="left:0px;top:770px" width="90" height="24" viewBox="0 770 90 24" fill="none"><circle cx="9.750" cy="780.300" r="4.300" stroke="#f4f4f6" stroke-width="3.100"/><path d="M12.900 783.600 L15.100 787.600" stroke="#f4f4f6" stroke-width="2.800"/><path d="M23.300 779.700 A4.950 4.950 0 0 0 23.300 789.600" stroke="#f4f4f6" stroke-width="2.600"/><circle cx="18.700" cy="777.400" r="1.500" fill="#e5342f"/><text x="29" y="789.700" font-family="'Liberation Sans',sans-serif" font-weight="bold" font-size="16.5" fill="#f4f4f6" textLength="55.200" lengthAdjust="spacing">AiCoin</text></svg>
</body>
</html>
